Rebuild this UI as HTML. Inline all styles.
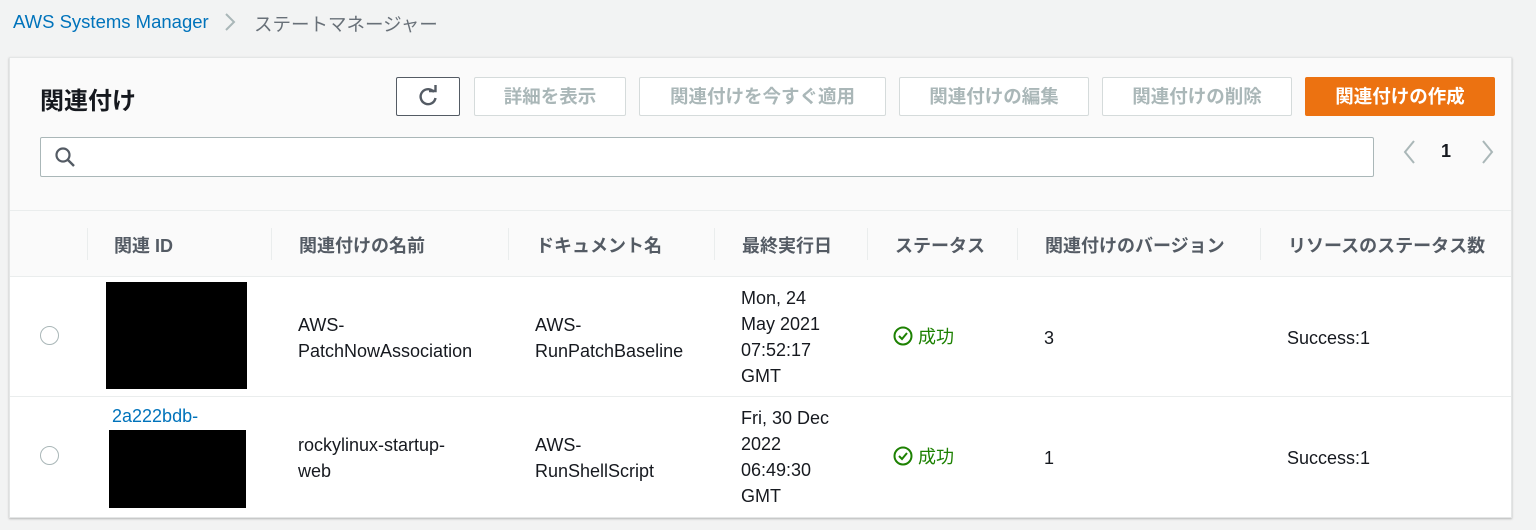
<!DOCTYPE html>
<html><head><meta charset="utf-8"><style>
*{box-sizing:border-box;margin:0;padding:0}
body{width:1536px;height:530px;background:#f2f3f3;font-family:"Liberation Sans","Noto Sans CJK JP",sans-serif;position:relative;overflow:hidden;color:#16191f}
.a{position:absolute;white-space:nowrap}
.card{position:absolute;left:9px;top:57px;width:1503px;height:461px;background:#fafafa;border:1px solid #e4e6e6;box-shadow:0 1px 2px rgba(0,0,0,.25)}
.btn{position:absolute;top:77px;height:39px;border:1px solid #d5dbdb;background:#fff;color:#aab7b8;font-weight:bold;font-size:18.5px;text-align:center;line-height:37px;border-radius:2px}
.th{position:absolute;top:232px;font-weight:bold;font-size:18px;color:#545b64}
.dv{position:absolute;top:228px;width:1px;height:32px;background:#eaeded}
.row{position:absolute;left:10px;width:1501px;background:#fff;border-top:1px solid #eaeded}
.t{position:absolute;font-size:18px;line-height:26px;color:#16191f;white-space:nowrap}
.radio{position:absolute;left:40px;width:19px;height:19px;border:1px solid #aab7b8;border-radius:50%;background:#fff}
.ok{position:absolute;font-size:18px;color:#1d8102;line-height:24px}
</style></head><body>
<div class="a" style="left:13px;top:11px;font-size:18.5px;color:#0073bb">AWS Systems Manager</div>
<svg class="a" style="left:224px;top:12px" width="12" height="20"><path d="M2 2 L10 10 L2 18" fill="none" stroke="#aab7b8" stroke-width="2"/></svg>
<div class="a" style="left:254px;top:11px;font-size:18.5px;color:#687078">ステートマネージャー</div>
<div class="card"></div>
<div class="a" style="left:40px;top:81px;font-size:24px;font-weight:bold">関連付け</div>
<div class="btn" style="left:396px;width:64px;border-color:#545b64"><svg width="24" height="24" viewBox="0 0 24 24" style="margin-top:7px"><path d="M18 7 A7.5 7.5 0 1 0 19.5 13" fill="none" stroke="#545b64" stroke-width="2.4"/><path d="M13 6 L19.5 6 L19.5 0" fill="none" stroke="#545b64" stroke-width="2.4"/></svg></div>
<div class="btn" style="left:474px;width:152px">詳細を表示</div>
<div class="btn" style="left:639px;width:247px">関連付けを今すぐ適用</div>
<div class="btn" style="left:899px;width:190px">関連付けの編集</div>
<div class="btn" style="left:1102px;width:190px">関連付けの削除</div>
<div class="btn" style="left:1305px;width:190px;background:#ec7211;border-color:#ec7211;color:#fff">関連付けの作成</div>
<div class="a" style="left:40px;top:137px;width:1334px;height:40px;background:#fff;border:1px solid #aab7b8;border-radius:2px"></div>
<svg class="a" style="left:54px;top:146px" width="22" height="22"><circle cx="9" cy="9" r="6.5" fill="none" stroke="#545b64" stroke-width="2.2"/><path d="M14 14 L20 20" stroke="#545b64" stroke-width="2.4"/></svg>
<svg class="a" style="left:1401px;top:139px" width="16" height="26"><path d="M13 2 L4 13 L13 24" fill="none" stroke="#aab7b8" stroke-width="2"/></svg>
<div class="a" style="left:1441px;top:141px;font-size:18px;font-weight:bold">1</div>
<svg class="a" style="left:1480px;top:139px" width="16" height="26"><path d="M3 2 L12 13 L3 24" fill="none" stroke="#aab7b8" stroke-width="2"/></svg>
<div class="a" style="left:10px;top:210px;width:1501px;height:1px;background:#eaeded"></div>
<div class="dv" style="left:87px"></div><div class="dv" style="left:271px"></div><div class="dv" style="left:508px"></div><div class="dv" style="left:714px"></div><div class="dv" style="left:867px"></div><div class="dv" style="left:1017px"></div><div class="dv" style="left:1260px"></div>
<div class="th" style="left:114px">関連 ID</div>
<div class="th" style="left:299px">関連付けの名前</div>
<div class="th" style="left:536px">ドキュメント名</div>
<div class="th" style="left:742px">最終実行日</div>
<div class="th" style="left:895px">ステータス</div>
<div class="th" style="left:1045px">関連付けのバージョン</div>
<div class="th" style="left:1288px">リソースのステータス数</div>
<div class="row" style="top:276px;height:120px"></div>
<div class="row" style="top:396px;height:121px"></div>
<div class="radio" style="top:326px"></div>
<div class="radio" style="top:446px"></div>
<div class="a" style="left:106px;top:282px;width:141px;height:107px;background:#000"></div>
<div class="a" style="left:112px;top:406px;font-size:18px;color:#0073bb">2a222bdb-</div>
<div class="a" style="left:109px;top:430px;width:137px;height:78px;background:#000"></div>
<div class="t" style="left:298px;top:312px">AWS-<br>PatchNowAssociation</div>
<div class="t" style="left:535px;top:312px">AWS-<br>RunPatchBaseline</div>
<div class="t" style="left:741px;top:285px">Mon, 24<br>May 2021<br>07:52:17<br>GMT</div>
<div class="ok" style="left:893px;top:325px"><svg width="20" height="20" style="vertical-align:-3px"><circle cx="10" cy="10" r="8.5" fill="none" stroke="#1d8102" stroke-width="2"/><path d="M6 10 L9 13 L14 7" fill="none" stroke="#1d8102" stroke-width="2"/></svg> 成功</div>
<div class="t" style="left:1044px;top:325px">3</div>
<div class="t" style="left:1287px;top:325px">Success:1</div>
<div class="t" style="left:298px;top:432px">rockylinux-startup-<br>web</div>
<div class="t" style="left:535px;top:432px">AWS-<br>RunShellScript</div>
<div class="t" style="left:741px;top:405px">Fri, 30 Dec<br>2022<br>06:49:30<br>GMT</div>
<div class="ok" style="left:893px;top:445px"><svg width="20" height="20" style="vertical-align:-3px"><circle cx="10" cy="10" r="8.5" fill="none" stroke="#1d8102" stroke-width="2"/><path d="M6 10 L9 13 L14 7" fill="none" stroke="#1d8102" stroke-width="2"/></svg> 成功</div>
<div class="t" style="left:1044px;top:445px">1</div>
<div class="t" style="left:1287px;top:445px">Success:1</div>
</body></html>
